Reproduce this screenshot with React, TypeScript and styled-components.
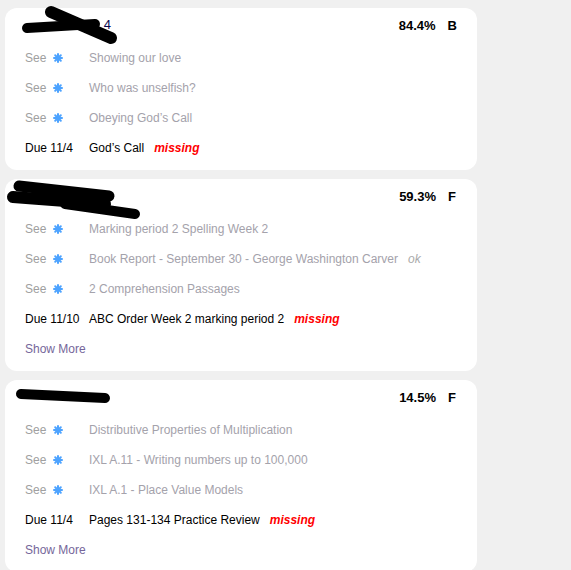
import * as React from "react";
import styled, { createGlobalStyle } from "styled-components";

const GlobalStyle = createGlobalStyle`
  body {
    margin: 0;
    background: #f0f0f0;
    font-family: "Liberation Sans", Arial, sans-serif;
    font-size: 12px;
  }
`;

const Page = styled.div`
  padding: 8px 0 8px 5px;
  display: flex;
  flex-direction: column;
  gap: 9px;
`;

const Card = styled.section`
  width: 472px;
  box-sizing: border-box;
  background: #fff;
  border-radius: 12px;
  padding: 9px 20px 7px;
`;

const Header = styled.div`
  display: flex;
  justify-content: space-between;
  align-items: center;
  height: 16px;
  margin-bottom: 10px;
  font-size: 13px;
  font-weight: bold;
  color: #000;
`;

const Title = styled.div`
  position: relative;
  width: 86px;
  height: 16px;
  line-height: 16px;
  text-align: right;
  font-weight: normal;
  color: #0a0a50;
`;

const Scribble = styled.svg`
  position: absolute;
  left: -20px;
  top: -14px;
  overflow: visible;
`;

const Score = styled.div`
  display: flex;
  gap: 12px;
`;

const Grade = styled.span`
  min-width: 9px;
`;

const Row = styled.div`
  display: grid;
  grid-template-columns: 64px auto;
  height: 30px;
  line-height: 30px;
`;

const Lead = styled.div<{ $due?: boolean }>`
  display: flex;
  align-items: center;
  gap: 7px;
  color: ${p => (p.$due ? "#000" : "#a0a0a0")};
`;

const Name = styled.div<{ $due?: boolean }>`
  color: ${p => (p.$due ? "#000" : "#a4a2ab")};
  white-space: nowrap;
`;

const Flag = styled.span<{ $missing?: boolean }>`
  margin-left: 10px;
  font-style: italic;
  font-weight: ${p => (p.$missing ? "bold" : "normal")};
  color: ${p => (p.$missing ? "#ff0000" : "#aaaaaa")};
`;

const ShowMore = styled.div`
  height: 30px;
  line-height: 30px;
  color: #75669a;
`;

const Star = () => (
  <svg width="10" height="10" viewBox="0 0 10 10">
    <g stroke="#4da3ff" strokeWidth="2" strokeLinecap="round">
      <line x1="5" y1="1" x2="5" y2="9" />
      <line x1="1" y1="5" x2="9" y2="5" />
      <line x1="2.2" y1="2.2" x2="7.8" y2="7.8" />
      <line x1="7.8" y1="2.2" x2="2.2" y2="7.8" />
    </g>
  </svg>
);

type Item = { kind: "see" | "due"; date?: string; name: string; flag?: "missing" | "ok" };

type Course = {
  tail: string;
  percent: string;
  grade: string;
  more: boolean;
  marks: { d: string; w: number }[];
  items: Item[];
};

const courses: Course[] = [
  {
    tail: "4",
    percent: "84.4%",
    grade: "B",
    more: false,
    marks: [
      { d: "M22 25 L90 21", w: 10 },
      { d: "M46 9 L106 35", w: 12 },
    ],
    items: [
      { kind: "see", name: "Showing our love" },
      { kind: "see", name: "Who was unselfish?" },
      { kind: "see", name: "Obeying God’s Call" },
      { kind: "due", date: "11/4", name: "God’s Call", flag: "missing" },
    ],
  },
  {
    tail: "",
    percent: "59.3%",
    grade: "F",
    more: true,
    marks: [
      { d: "M14 12 L104 22", w: 11 },
      { d: "M8 23 L100 30", w: 12 },
      { d: "M60 30 L130 40", w: 10 },
    ],
    items: [
      { kind: "see", name: "Marking period 2 Spelling Week 2" },
      { kind: "see", name: "Book Report - September 30 - George Washington Carver", flag: "ok" },
      { kind: "see", name: "2 Comprehension Passages" },
      { kind: "due", date: "11/10", name: "ABC Order Week 2 marking period 2", flag: "missing" },
    ],
  },
  {
    tail: "",
    percent: "14.5%",
    grade: "F",
    more: true,
    marks: [{ d: "M16 19 L100 23", w: 10 }],
    items: [
      { kind: "see", name: "Distributive Properties of Multiplication" },
      { kind: "see", name: "IXL A.11 - Writing numbers up to 100,000" },
      { kind: "see", name: "IXL A.1 - Place Value Models" },
      { kind: "due", date: "11/4", name: "Pages 131-134 Practice Review", flag: "missing" },
    ],
  },
];

const App: React.FC = () => (
  <>
    <GlobalStyle />
    <Page>
      {courses.map((c, i) => (
        <Card key={i}>
          <Header>
            <Title>
              {c.tail}
              <Scribble width="130" height="44" viewBox="0 0 130 44">
                {c.marks.map((m, j) => (
                  <path key={j} d={m.d} stroke="#000" strokeWidth={m.w} strokeLinecap="round" fill="none" />
                ))}
              </Scribble>
            </Title>
            <Score>
              <span>{c.percent}</span>
              <Grade>{c.grade}</Grade>
            </Score>
          </Header>
          {c.items.map((it, j) => (
            <Row key={j}>
              {it.kind === "see" ? (
                <Lead>
                  See <Star />
                </Lead>
              ) : (
                <Lead $due>Due {it.date}</Lead>
              )}
              <Name $due={it.kind === "due"}>
                {it.name}
                {it.flag && <Flag $missing={it.flag === "missing"}>{it.flag}</Flag>}
              </Name>
            </Row>
          ))}
          {c.more && <ShowMore>Show More</ShowMore>}
        </Card>
      ))}
    </Page>
  </>
);

export default App;
